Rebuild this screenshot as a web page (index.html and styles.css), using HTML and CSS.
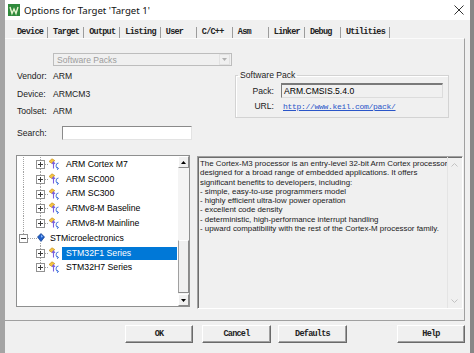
FILE: index.html
```html
<!DOCTYPE html>
<html>
  <head>
    <meta charset="utf-8">
    <link rel="stylesheet" href="styles.css">
  </head>
  <body>
    <div class="window">
      <div class="titlebar">
        <svg class="appicon" width="12" height="12" viewBox="0 0 12 12">
          <rect x="0" y="0" width="12" height="12" fill="#2f8a3c"/>
          <path d="M2 3 L4 9.5 L6 5 L8 9.5 L10 3" fill="none" stroke="#e6f4cf" stroke-width="1.4"/>
        </svg>
        <span class="title">Options for Target 'Target 1'</span>
        <svg class="close" width="10" height="10" viewBox="0 0 10 10">
          <path d="M0.5 0.5 L9.5 9.5 M9.5 0.5 L0.5 9.5" stroke="#333" stroke-width="1"/>
        </svg>
      </div>

      <div class="tabs">
        <span class="tab active">Device</span>
        <span class="tab">Target</span>
        <span class="tab">Output</span>
        <span class="tab">Listing</span>
        <span class="tab">User</span>
        <span class="tab">C/C++</span>
        <span class="tab">Asm</span>
        <span class="tab">Linker</span>
        <span class="tab">Debug</span>
        <span class="tab">Utilities</span>
      </div>

      <div class="panel">
        <div class="top">
          <div class="devinfo">
            <div class="combo">
              <span class="combo-text">Software Packs</span>
              <span class="combo-btn">
                <svg width="5" height="3" viewBox="0 0 5 3"><path d="M0 0 H5 L2.5 3 Z" fill="#b0b0b0"/></svg>
              </span>
            </div>
            <div class="info">
              <span>Vendor:</span><span>ARM</span>
              <span>Device:</span><span>ARMCM3</span>
              <span>Toolset:</span><span>ARM</span>
            </div>
            <div class="search">
              <label>Search:</label>
              <input type="text">
            </div>
          </div>

          <fieldset class="pack">
            <legend>Software Pack</legend>
            <div class="packrow first">
              <span class="plabel">Pack:</span>
              <span class="field">ARM.CMSIS.5.4.0</span>
            </div>
            <div class="packrow">
              <span class="plabel">URL:</span>
              <a class="link" href="#">http://www.keil.com/pack/</a>
            </div>
          </fieldset>
        </div>

        <div class="bottom">
          <div class="tree">
            <div class="rows">
              <div class="row">
                <svg class="twig" width="45" height="15" viewBox="0 0 45 15">
                  <path d="M6.5 0V15 M23.5 0V3 M23.5 12V15 M28 7.5H31" class="dots"/>
                  <use href="#exp-plus" x="19" y="3" width="9" height="9"/>
                  <use href="#ic-group" x="31" y="1" width="12" height="12"/>
                </svg>
                <span class="label">ARM Cortex M7</span>
              </div>
              <div class="row">
                <svg class="twig" width="45" height="15" viewBox="0 0 45 15">
                  <path d="M6.5 0V15 M23.5 0V3 M23.5 12V15 M28 7.5H31" class="dots"/>
                  <use href="#exp-plus" x="19" y="3" width="9" height="9"/>
                  <use href="#ic-group" x="31" y="1" width="12" height="12"/>
                </svg>
                <span class="label">ARM SC000</span>
              </div>
              <div class="row">
                <svg class="twig" width="45" height="15" viewBox="0 0 45 15">
                  <path d="M6.5 0V15 M23.5 0V3 M23.5 12V15 M28 7.5H31" class="dots"/>
                  <use href="#exp-plus" x="19" y="3" width="9" height="9"/>
                  <use href="#ic-group" x="31" y="1" width="12" height="12"/>
                </svg>
                <span class="label">ARM SC300</span>
              </div>
              <div class="row">
                <svg class="twig" width="45" height="15" viewBox="0 0 45 15">
                  <path d="M6.5 0V15 M23.5 0V3 M23.5 12V15 M28 7.5H31" class="dots"/>
                  <use href="#exp-plus" x="19" y="3" width="9" height="9"/>
                  <use href="#ic-group" x="31" y="1" width="12" height="12"/>
                </svg>
                <span class="label">ARMv8-M Baseline</span>
              </div>
              <div class="row">
                <svg class="twig" width="45" height="15" viewBox="0 0 45 15">
                  <path d="M6.5 0V15 M23.5 0V3 M28 7.5H31" class="dots"/>
                  <use href="#exp-plus" x="19" y="3" width="9" height="9"/>
                  <use href="#ic-group" x="31" y="1" width="12" height="12"/>
                </svg>
                <span class="label">ARMv8-M Mainline</span>
              </div>
              <div class="row">
                <svg class="twig" width="29" height="15" viewBox="0 0 29 15">
                  <path d="M6.5 0V3 M11 7.5H20 M23.5 12V15" class="dots"/>
                  <use href="#exp-minus" x="2" y="3" width="9" height="9"/>
                  <use href="#ic-vendor" x="20" y="2" width="8" height="9"/>
                </svg>
                <span class="label">STMicroelectronics</span>
              </div>
              <div class="row">
                <svg class="twig" width="45" height="15" viewBox="0 0 45 15">
                  <path d="M23.5 0V3 M23.5 12V15 M28 7.5H31" class="dots"/>
                  <use href="#exp-plus" x="19" y="3" width="9" height="9"/>
                  <use href="#ic-group" x="31" y="1" width="12" height="12"/>
                </svg>
                <span class="label selected">STM32F1 Series</span>
              </div>
              <div class="row">
                <svg class="twig" width="45" height="15" viewBox="0 0 45 15">
                  <path d="M23.5 0V3 M28 7.5H31" class="dots"/>
                  <use href="#exp-plus" x="19" y="3" width="9" height="9"/>
                  <use href="#ic-group" x="31" y="1" width="12" height="12"/>
                </svg>
                <span class="label">STM32H7 Series</span>
              </div>
            </div>
            <div class="scrollbar">
              <div class="sb-btn">
                <svg width="5" height="3" viewBox="0 0 5 3"><path d="M0 3 H5 L2.5 0 Z" fill="#000"/></svg>
              </div>
              <div class="sb-track"><div class="sb-thumb"></div></div>
              <div class="sb-btn">
                <svg width="5" height="3" viewBox="0 0 5 3"><path d="M0 0 H5 L2.5 3 Z" fill="#000"/></svg>
              </div>
            </div>
          </div>

          <div class="desc">
            <div class="desc-text">The Cortex-M3 processor is an entry-level 32-bit Arm Cortex processor
designed for a broad range of embedded applications. It offers
significant benefits to developers, including:
- simple, easy-to-use programmers model
- highly efficient ultra-low power operation
- excellent code density
- deterministic, high-performance interrupt handling
- upward compatibility with the rest of the Cortex-M processor family.</div>
            <div class="desc-scroll">
              <svg width="7" height="4" viewBox="0 0 7 4"><path d="M0.5 3.5 L3.5 0.5 L6.5 3.5" fill="none" stroke="#c2c2c2"/></svg>
              <svg width="7" height="4" viewBox="0 0 7 4"><path d="M0.5 0.5 L3.5 3.5 L6.5 0.5" fill="none" stroke="#c2c2c2"/></svg>
            </div>
          </div>
        </div>
      </div>

      <div class="buttons">
        <button class="btn ok">OK</button>
        <button class="btn cancel">Cancel</button>
        <button class="btn defaults">Defaults</button>
        <button class="btn help">Help</button>
      </div>
    </div>

    <svg class="defs" width="0" height="0">
      <defs>
        <symbol id="exp-plus" viewBox="0 0 9 9">
          <rect x="0.5" y="0.5" width="8" height="8" fill="#fff" stroke="#919191"/>
          <path d="M2 4.5H7 M4.5 2V7" stroke="#3a3a3a"/>
        </symbol>
        <symbol id="exp-minus" viewBox="0 0 9 9">
          <rect x="0.5" y="0.5" width="8" height="8" fill="#fff" stroke="#919191"/>
          <path d="M2 4.5H7" stroke="#3a3a3a"/>
        </symbol>
        <symbol id="ic-group" viewBox="0 0 12 12">
          <path d="M1 3.5 L4 0.8 L6.8 2.6 L3.8 5.4 Z" fill="#f4c542" stroke="#c8901a" stroke-width="0.7"/>
          <path d="M5.5 4 V10.5 M4 6 L5.5 4 L7 6" fill="none" stroke="#7a5ee0" stroke-width="1.1"/>
          <path d="M10.5 5 Q8 5 8 8 Q8 10.5 10.5 10.5 M9 9 L10.6 10.5 L9 11.8" fill="none" stroke="#4f7de0" stroke-width="1"/>
        </symbol>
        <symbol id="ic-vendor" viewBox="0 0 8 9">
          <path d="M4 0.5 L7.5 4 L4 8.5 L0.5 4 Z" fill="#1f5fc8" stroke="#0e3a85" stroke-width="0.7"/>
          <path d="M4 1.5 L6 4 L4 4.5 Z" fill="#8ab8ff"/>
        </symbol>
      </defs>
    </svg>
  </body>
</html>
```

FILE: styles.css
```css
body {
    margin: 0;
    background-color: #878787;
    font-family: "Liberation Sans", Arial, sans-serif;
    font-size: 8.6px;
    color: #000;
}

.window {
    width: 470px;
    height: 353px;
    box-sizing: border-box;
    border-left: 5px solid #a4a4a4;
    background-color: #f0f0f0;
    display: flex;
    flex-direction: column;
    overflow: hidden;
}

/* title bar */
.titlebar {
    height: 20px;
    flex-shrink: 0;
    display: flex;
    align-items: center;
    padding: 0 6px 0 3px;
    background-color: #fff;
}
.appicon {
    margin-right: 4px;
}
.title {
    flex: 1;
    font-family: "Noto Sans", "Liberation Sans", sans-serif;
    font-size: 9.6px;
    color: #111;
}

/* tabs */
.tabs {
    height: 18px;
    flex-shrink: 0;
    display: flex;
    padding-left: 7px;
    box-sizing: border-box;
}
.tab {
    font-family: "Liberation Mono", "Courier New", monospace;
    font-weight: bold;
    font-size: 8.5px;
    letter-spacing: -0.75px;
    height: 11px;
    line-height: 11px;
    margin-top: 7px;
    padding: 0 4px 0 5px;
    min-width: 36px;
    box-sizing: border-box;
    border-right: 1px solid #9c9c9c;
    white-space: pre;
    color: #222;
}

/* property page */
.panel {
    width: 460px;
    height: 283px;
    flex-shrink: 0;
    box-sizing: border-box;
    border-top: 1px solid #fbfbfb;
    border-right: 1px solid #a0a0a0;
    border-bottom: 1px solid #a0a0a0;
    padding-left: 12px;
}
.top {
    display: flex;
    align-items: flex-start;
}
.devinfo {
    width: 215px;
    padding-top: 14px;
}
.combo {
    margin-left: 36px;
    width: 179px;
    height: 13px;
    box-sizing: border-box;
    border: 1px solid #bdbdbd;
    display: flex;
    align-items: center;
    padding-left: 3px;
    color: #9d9d9d;
}
.combo-text {
    flex: 1;
}
.combo-btn {
    width: 9px;
    height: 9px;
    margin-right: 1px;
    display: flex;
    align-items: center;
    justify-content: center;
    border: 1px solid #e2e2e2;
}
.info {
    display: grid;
    grid-template-columns: 36px auto;
    grid-auto-rows: 17.5px;
    align-items: center;
    margin-top: 1.5px;
    color: #222;
}
.search {
    display: flex;
    align-items: center;
    margin-top: 6px;
}
.search label {
    width: 45px;
    color: #222;
}
.search input {
    width: 130px;
    height: 14px;
    box-sizing: border-box;
    margin: 0;
    padding: 0;
    border: 1px solid;
    border-color: #8a8a8a #e3e3e3 #e3e3e3 #8a8a8a;
    background-color: #fff;
}

/* software pack group */
.pack {
    margin: 31px 0 0 3px;
    padding: 0 0 3px 0;
    width: 214px;
    height: 48px;
    box-sizing: border-box;
    border: 1px solid #d3d3d3;
    box-shadow: inset 1px 1px #fff;
}
.pack legend {
    padding: 0 2px;
    margin-left: 2px;
    line-height: 10px;
    color: #222;
}
.packrow {
    display: flex;
    align-items: center;
    height: 14px;
    margin-top: 1px;
}
.packrow.first {
    height: 15px;
    margin-top: 3px;
}
.plabel {
    width: 45px;
    box-sizing: border-box;
    padding-right: 7px;
    text-align: right;
    color: #222;
}
.field {
    width: 162px;
    height: 15px;
    box-sizing: border-box;
    border: 1px solid;
    border-color: #7a7a7a #dcdcdc #dcdcdc #7a7a7a;
    border-top-width: 2px;
    padding-left: 2px;
    line-height: 12px;
}
.link {
    padding-left: 2px;
    font-family: "Liberation Mono", "Courier New", monospace;
    font-size: 8px;
    letter-spacing: -0.3px;
    color: #2a55c8;
}

/* device tree + description */
.bottom {
    display: flex;
    align-items: flex-start;
    margin: 15px 0 0 -1px;
}
.tree {
    width: 174px;
    height: 152px;
    box-sizing: border-box;
    border: 1px solid #8e8f8f;
    background-color: #fff;
    display: flex;
}
.rows {
    flex: 1;
    padding-top: 1px;
}
.row {
    display: flex;
    align-items: center;
    height: 14.8px;
}
.twig {
    flex-shrink: 0;
}
.dots {
    fill: none;
    stroke: #a3a3a3;
    stroke-dasharray: 1 1;
}
.label {
    font-size: 8.7px;
    height: 13px;
    line-height: 13px;
    padding: 0 4px;
}
.label.selected {
    flex: 1;
    margin-right: 1px;
    background-color: #0078d7;
    color: #fff;
}
.scrollbar {
    width: 11px;
    display: flex;
    flex-direction: column;
    background-color: #f4f4f4;
}
.sb-btn {
    height: 12px;
    box-sizing: border-box;
    border: 1px solid;
    border-color: #fff #8a8a8a #8a8a8a #fff;
    background-color: #f0f0f0;
    display: flex;
    align-items: center;
    justify-content: center;
}
.sb-track {
    flex: 1;
}
.sb-thumb {
    margin-top: 72px;
    height: 53px;
    box-sizing: border-box;
    border: 1px solid;
    border-color: #fff #8a8a8a #8a8a8a #a0a0a0;
    background-color: #f0f0f0;
}

.desc {
    width: 266px;
    height: 153px;
    margin: 1px 0 0 7px;
    box-sizing: border-box;
    border: 1px solid;
    border-color: #a0a0a0 #fff #fff #a0a0a0;
    box-shadow: inset 1px 1px #6d6d6d;
    display: flex;
}
.desc-text {
    flex: 1;
    min-width: 0;
    overflow: hidden;
    padding: 2px 0 0 2px;
    font-size: 7.9px;
    line-height: 9.3px;
    white-space: pre;
    color: #1a1a1a;
}
.desc-scroll {
    width: 15px;
    flex-shrink: 0;
    box-sizing: border-box;
    border-left: 1px solid #e4e4e4;
    display: flex;
    flex-direction: column;
    justify-content: space-between;
    align-items: center;
    padding: 6px 2px 5px 0;
}

/* dialog buttons */
.buttons {
    display: flex;
    margin-top: 4px;
    padding-left: 120px;
}
.btn {
    height: 18px;
    margin: 0;
    padding: 0;
    box-sizing: border-box;
    border: 1px solid;
    border-color: #fff #6a6a6a #6a6a6a #fff;
    box-shadow: inset -1px -1px #a0a0a0;
    background-color: #f0f0f0;
    font-family: "Liberation Mono", "Courier New", monospace;
    font-weight: bold;
    font-size: 8.5px;
    letter-spacing: -0.75px;
    color: #222;
}
.ok {
    width: 68px;
}
.cancel {
    width: 69px;
    margin-left: 9px;
}
.defaults {
    width: 69px;
    margin-left: 7px;
}
.help {
    width: 68px;
    margin-left: 50px;
}
```
